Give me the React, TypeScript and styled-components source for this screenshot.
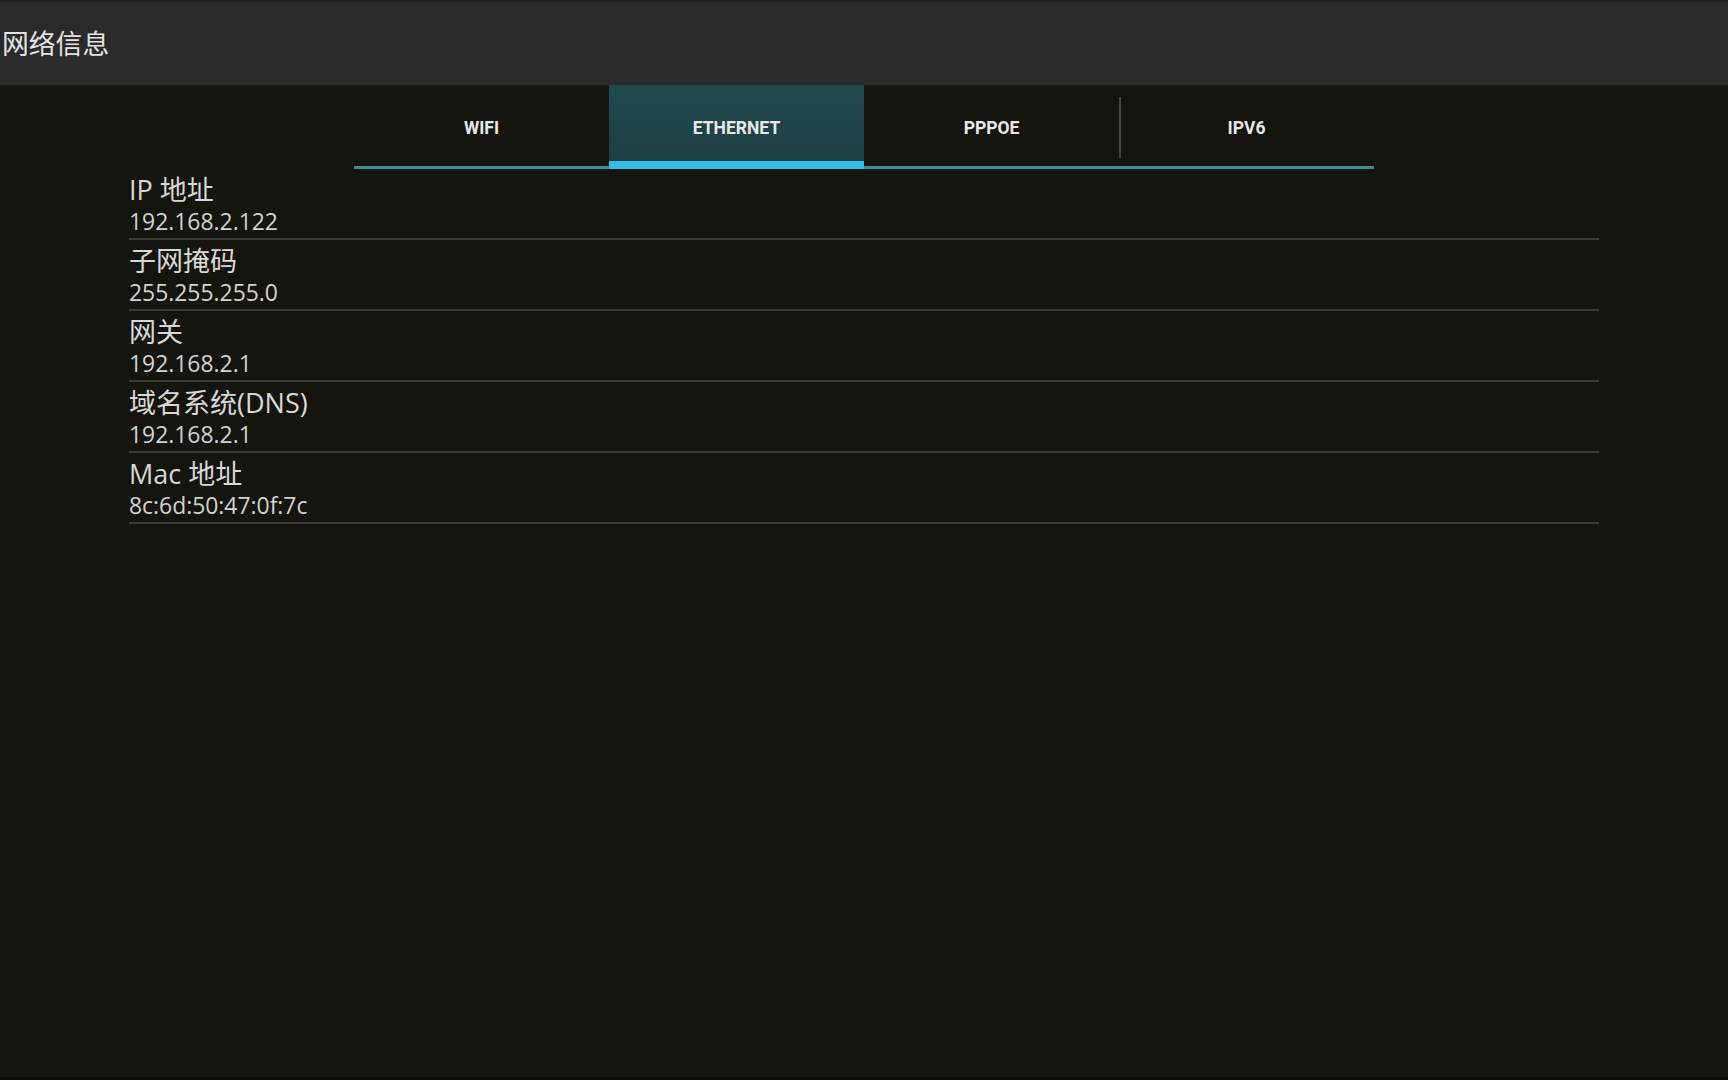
import React from "react";
import styled, { createGlobalStyle } from "styled-components";

const GlobalStyle = createGlobalStyle`
  html, body {
    margin: 0;
    padding: 0;
    background: #151510;
  }
  body {
    font-family: "Open Sans", "Noto Sans CJK SC", "Noto Sans", sans-serif;
    -webkit-font-smoothing: antialiased;
  }
  * { box-sizing: border-box; }
`;

const Page = styled.div`
  width: 1728px;
  height: 1080px;
  background: #151510;
  display: flex;
  flex-direction: column;
  overflow: hidden;
  border-bottom: 3px solid #0c0c09;
`;

const ActionBar = styled.header`
  height: 85px;
  flex: none;
  background: #2a2a2a;
  border-top: 2px solid #222;
  display: flex;
  align-items: center;
  padding-left: 2px;
  padding-bottom: 2px;
`;

const Title = styled.h1`
  margin: 0;
  font-family: "Noto Sans CJK SC", sans-serif;
  font-weight: 400;
  font-size: 26.8px;
  color: #e4e4e4;
  letter-spacing: 0;
`;

const TabStrip = styled.nav`
  display: flex;
  margin-left: 354px;
  width: 1020px;
  height: 84px;
  flex: none;
`;

const Tab = styled.div<{ $active?: boolean; $divider?: boolean }>`
  position: relative;
  flex: 1 1 0;
  display: flex;
  align-items: center;
  justify-content: center;
  padding-top: 2px;
  font-family: Roboto, sans-serif;
  font-weight: 700;
  font-size: 17.5px;
  color: #e8e8e8;
  background: ${(p) =>
    p.$active ? "linear-gradient(180deg, #22494e 0%, #1c3e42 100%)" : "transparent"};
  box-shadow: ${(p) =>
    p.$active ? "inset 0 -8px 0 #34bde6" : "inset 0 -3px 0 #3d8b95"};

  &::before {
    content: "";
    display: ${(p) => (p.$divider ? "block" : "none")};
    position: absolute;
    left: 0;
    top: 12px;
    bottom: 11px;
    width: 2px;
    background: #45453f;
  }
`;

const List = styled.section`
  margin-left: 129px;
  width: 1470px;
  display: flex;
  flex-direction: column;
`;

const Row = styled.div`
  height: 71px;
  padding-top: 5px;
  border-bottom: 2px solid #3a3a35;
  display: flex;
  flex-direction: column;
`;

const Label = styled.div`
  font-family: "Open Sans", "Noto Sans CJK SC", sans-serif;
  font-size: 27px;
  line-height: 31px;
  color: #d8d8d6;
`;

const Value = styled.div`
  margin-top: 2px;
  font-family: "Open Sans", "Noto Sans CJK SC", sans-serif;
  font-size: 22.9px;
  line-height: 30px;
  color: #d2d2d0;
`;

const tabs = [
  { name: "WIFI" },
  { name: "ETHERNET", active: true },
  { name: "PPPOE" },
  { name: "IPV6", divider: true },
];

const rows = [
  { label: "IP 地址", value: "192.168.2.122" },
  { label: "子网掩码", value: "255.255.255.0" },
  { label: "网关", value: "192.168.2.1" },
  { label: "域名系统(DNS)", value: "192.168.2.1" },
  { label: "Mac 地址", value: "8c:6d:50:47:0f:7c" },
];

export default function App() {
  return (
    <>
      <GlobalStyle />
      <Page>
        <ActionBar>
          <Title>网络信息</Title>
        </ActionBar>
        <TabStrip>
          {tabs.map((t) => (
            <Tab key={t.name} $active={t.active} $divider={t.divider}>
              {t.name}
            </Tab>
          ))}
        </TabStrip>
        <List>
          {rows.map((r) => (
            <Row key={r.label}>
              <Label>{r.label}</Label>
              <Value>{r.value}</Value>
            </Row>
          ))}
        </List>
      </Page>
    </>
  );
}
